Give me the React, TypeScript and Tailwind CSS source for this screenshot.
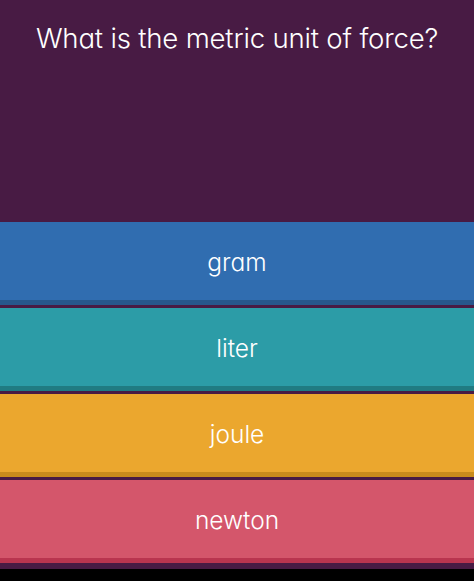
const answers = [
  { label: 'gram', bg: 'bg-[#306db0]', edge: 'border-[#27578c]' },
  { label: 'liter', bg: 'bg-[#2c9ca7]', edge: 'border-[#207b82]' },
  { label: 'joule', bg: 'bg-[#eba72e]', edge: 'border-[#c98b1c]' },
  { label: 'newton', bg: 'bg-[#d4566b]', edge: 'border-[#b9354f]' },
];

export default function App() {
  return (
    <div className="w-[474px] h-[581px] bg-black font-['Inter','Noto_Sans',sans-serif] [font-feature-settings:'cv11'] text-white">
      <div className="bg-[#481b44] pb-[6px]">
        <div className="h-[222px] px-4 pt-[21px] text-center">
          <h1 className="text-[27.6px] leading-[34px] font-light tracking-[-0.2px]">
            What is the metric unit of force?
          </h1>
        </div>
        <div className="flex flex-col gap-[3px]">
          {answers.map((a) => (
            <button
              key={a.label}
              className={`h-[83px] w-full border-b-[5px] ${a.bg} ${a.edge} flex items-center justify-center pt-[2px] text-[24.5px] font-light`}
            >
              {a.label}
            </button>
          ))}
        </div>
      </div>
    </div>
  );
}
